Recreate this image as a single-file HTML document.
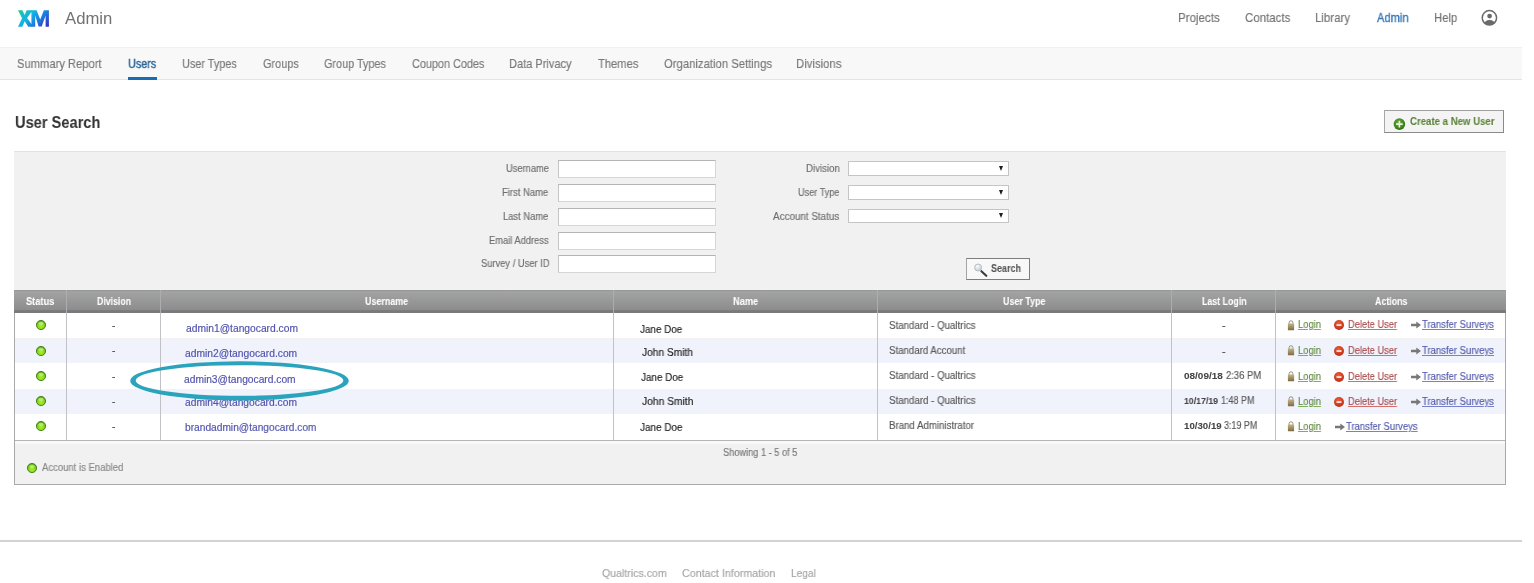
<!DOCTYPE html>
<html><head><meta charset="utf-8">
<style>
*{margin:0;padding:0;box-sizing:border-box}
html,body{width:1534px;height:583px;overflow:hidden;background:#fff;font-family:"Liberation Sans",sans-serif}
.tx{position:absolute;white-space:nowrap;transform-origin:0 0;will-change:transform;-webkit-text-stroke:0.15px currentColor;font-family:"Liberation Sans",sans-serif}
.b{position:absolute}
.inp{position:absolute;left:557.6px;width:158.6px;height:18px;background:#fff;border:1px solid #d6d6d6;border-top-color:#b4b4b4;border-left-color:#c4c4c4}
.sel{position:absolute;left:848px;width:160.5px;height:14.6px;background:#fff;border:1px solid #c4c4c4}
.sel:after{content:"";position:absolute;left:150px;top:3.8px;border-left:2.5px solid transparent;border-right:2.5px solid transparent;border-top:5px solid #1e1e1e}
.vl{position:absolute;width:1px}
.dot{position:absolute;width:10px;height:10px;border-radius:50%;background:radial-gradient(circle at 50% 45%,#b8f260 0,#8ad82a 35%,#58b010 70%,#3a7e08 100%)}
.row{position:absolute;left:15px;width:1490px}
</style></head><body>
<!-- logo -->
<svg class="b" style="left:0;top:0" width="60" height="35" viewBox="0 0 60 35">
 <defs><linearGradient id="xm" gradientUnits="userSpaceOnUse" x1="21" y1="8" x2="43" y2="31"><stop offset="0" stop-color="#1fca9a"/><stop offset="0.38" stop-color="#12b3e6"/><stop offset="0.7" stop-color="#1f72dc"/><stop offset="1" stop-color="#3b2cc0"/></linearGradient></defs>
 <path fill="url(#xm)" d="M18 10.2H22.4L24.6 15L26.7 10.2H32.2V12H31.4L27.1 18.1L31.4 23.9H32.2V26.8H28.2L24.7 21.3L22.3 26.8H18L22.1 18.3Z"/>
 <path fill="url(#xm)" d="M31.4 26.8V10.2H36.6L40.2 19.6L43.9 10.2H48.9V26.8H45.6V15.5L41.7 26.6H38.6L35.2 15.5V26.8Z"/>
</svg>
<!-- user icon -->
<svg class="b" style="left:1480px;top:8px" width="20" height="20" viewBox="0 0 20 20">
 <defs><clipPath id="uc"><circle cx="9.4" cy="9.8" r="7.2"/></clipPath></defs>
 <circle cx="9.4" cy="9.8" r="7.2" fill="none" stroke="#6a6a6a" stroke-width="1.5"/>
 <circle cx="9.6" cy="8.1" r="2.4" fill="#6a6a6a"/>
 <path clip-path="url(#uc)" d="M4.6 20V15.6Q4.9 12.1 9.6 12.1Q14.3 12.1 14.6 15.6V20Z" fill="#6a6a6a"/>
</svg>
<!-- tab bar -->
<div class="b" style="left:0;top:47px;width:1522px;height:33px;background:#f8f8f8;border-top:1px solid #f0f0f0;border-bottom:1px solid #e4e4e4"></div>
<div class="b" style="left:128px;top:77px;width:29px;height:3px;background:#1b6db3"></div>
<!-- create button -->
<div class="b" style="left:1384px;top:110.2px;width:120px;height:22.4px;background:#f4f4f4;border:1px solid #8a8a8a;border-left-color:#a8a8a8;border-top-color:#a0a0a0"></div>
<svg class="b" style="left:1393px;top:117.5px" width="13" height="13" viewBox="0 0 13 13">
 <defs><radialGradient id="gp" cx="0.45" cy="0.4" r="0.65"><stop offset="0" stop-color="#6fb040"/><stop offset="1" stop-color="#2c6e12"/></radialGradient></defs>
 <circle cx="6.4" cy="6.1" r="5.8" fill="url(#gp)"/>
 <path d="M5.6 2.8H7.2V5.3H9.7V6.9H7.2V9.4H5.6V6.9H3.1V5.3H5.6Z" fill="#e4f6d8"/>
</svg>
<!-- search panel -->
<div class="b" style="left:14px;top:151px;width:1492px;height:140px;background:#f1f1f1;border-top:1px solid #e2e2e2"></div>
<div class="inp" style="top:160.1px"></div>
<div class="inp" style="top:184.3px"></div>
<div class="inp" style="top:208.1px"></div>
<div class="inp" style="top:231.7px"></div>
<div class="inp" style="top:255.2px"></div>
<div class="sel" style="top:161.3px"></div>
<div class="sel" style="top:185.1px"></div>
<div class="sel" style="top:208.6px"></div>
<div class="b" style="left:965.8px;top:258.1px;width:64px;height:21.8px;background:#f8f8f8;border:1px solid #7d7d7d;border-left-color:#a5a5a5"></div>
<svg class="b" style="left:972px;top:262px" width="17" height="17" viewBox="0 0 17 17">
 <defs><radialGradient id="lens" cx="0.4" cy="0.35" r="0.75"><stop offset="0" stop-color="#fafbfc"/><stop offset="1" stop-color="#bfc4cc"/></radialGradient></defs>
 <line x1="9.4" y1="9.2" x2="14.3" y2="13.8" stroke="#3a3a3a" stroke-width="2.1" stroke-linecap="round"/>
 <circle cx="6.1" cy="5.5" r="3.5" fill="url(#lens)" stroke="#b4b9c2" stroke-width="0.9"/>
</svg>
<!-- table -->
<div class="b" style="left:14px;top:290.1px;width:1492px;height:22.8px;background:linear-gradient(#959595,#a2a3a2 8%,#8d8d8f 85%,#787878 90%,#7a7a7a)"></div>
<div class="b" style="left:14px;top:312.9px;width:1492px;height:171.9px;background:#f1f1f1;border:1px solid #a9a9a9;border-top:none"></div>
<div class="row" style="top:312.9px;height:25.6px;background:#fff"></div>
<div class="row" style="top:338.5px;height:24px;background:#f0f3fc"></div>
<div class="row" style="top:362.5px;height:26.5px;background:#fff"></div>
<div class="row" style="top:389px;height:24.5px;background:#f0f3fc"></div>
<div class="row" style="top:413.5px;height:26.5px;background:#fff"></div>
<div class="b" style="left:15px;top:440px;width:1490px;height:1px;background:#b4b4b4"></div>
<div class="b" style="left:15px;top:441px;width:1490px;height:3px;background:#f8f8f8"></div>
<!-- column lines -->
<div class="vl" style="left:65.5px;top:290.1px;height:22.8px;background:#adadad"></div>
<div class="vl" style="left:160px;top:290.1px;height:22.8px;background:#adadad"></div>
<div class="vl" style="left:612.5px;top:290.1px;height:22.8px;background:#adadad"></div>
<div class="vl" style="left:876.5px;top:290.1px;height:22.8px;background:#adadad"></div>
<div class="vl" style="left:1170.5px;top:290.1px;height:22.8px;background:#adadad"></div>
<div class="vl" style="left:1274.5px;top:290.1px;height:22.8px;background:#adadad"></div>
<div class="vl" style="left:65.5px;top:312.9px;height:127.6px;background:#c2c2c6;width:1.4px"></div>
<div class="vl" style="left:160px;top:312.9px;height:127.6px;background:#c2c2c6;width:1.4px"></div>
<div class="vl" style="left:612.5px;top:312.9px;height:127.6px;background:#c2c2c6;width:1.4px"></div>
<div class="vl" style="left:876.5px;top:312.9px;height:127.6px;background:#c2c2c6;width:1.4px"></div>
<div class="vl" style="left:1170.5px;top:312.9px;height:127.6px;background:#c2c2c6;width:1.4px"></div>
<div class="vl" style="left:1274.5px;top:312.9px;height:127.6px;background:#c2c2c6;width:1.4px"></div>
<!-- status dots -->
<svg width="0" height="0" style="position:absolute"><defs><radialGradient id="gd" cx="0.5" cy="0.62" r="0.6"><stop offset="0" stop-color="#aef22e"/><stop offset="0.6" stop-color="#86d41c"/><stop offset="1" stop-color="#4c9a10"/></radialGradient></defs></svg>
<svg class="b" style="left:34.50px;top:319.40px" width="12" height="12" viewBox="0 0 12 12"><circle cx="6" cy="6" r="4.6" fill="url(#gd)" stroke="#3f7f12" stroke-width="0.9"/><ellipse cx="6" cy="4.4" rx="2.6" ry="1.6" fill="#d8f8a8" opacity="0.55"/></svg>
<svg class="b" style="left:34.50px;top:344.60px" width="12" height="12" viewBox="0 0 12 12"><circle cx="6" cy="6" r="4.6" fill="url(#gd)" stroke="#3f7f12" stroke-width="0.9"/><ellipse cx="6" cy="4.4" rx="2.6" ry="1.6" fill="#d8f8a8" opacity="0.55"/></svg>
<svg class="b" style="left:34.50px;top:369.70px" width="12" height="12" viewBox="0 0 12 12"><circle cx="6" cy="6" r="4.6" fill="url(#gd)" stroke="#3f7f12" stroke-width="0.9"/><ellipse cx="6" cy="4.4" rx="2.6" ry="1.6" fill="#d8f8a8" opacity="0.55"/></svg>
<svg class="b" style="left:34.50px;top:395.00px" width="12" height="12" viewBox="0 0 12 12"><circle cx="6" cy="6" r="4.6" fill="url(#gd)" stroke="#3f7f12" stroke-width="0.9"/><ellipse cx="6" cy="4.4" rx="2.6" ry="1.6" fill="#d8f8a8" opacity="0.55"/></svg>
<svg class="b" style="left:34.50px;top:420.10px" width="12" height="12" viewBox="0 0 12 12"><circle cx="6" cy="6" r="4.6" fill="url(#gd)" stroke="#3f7f12" stroke-width="0.9"/><ellipse cx="6" cy="4.4" rx="2.6" ry="1.6" fill="#d8f8a8" opacity="0.55"/></svg>
<svg class="b" style="left:25.90px;top:462.20px" width="12" height="12" viewBox="0 0 12 12"><circle cx="6" cy="6" r="4.6" fill="url(#gd)" stroke="#3f7f12" stroke-width="0.9"/><ellipse cx="6" cy="4.4" rx="2.6" ry="1.6" fill="#d8f8a8" opacity="0.55"/></svg>
<svg class="b" style="left:1287.00px;top:319.50px" width="8" height="11" viewBox="0 0 8 11"><defs><linearGradient id="lk" x1="0" y1="0" x2="0" y2="1"><stop offset="0" stop-color="#c2b486"/><stop offset="1" stop-color="#7c6b40"/></linearGradient></defs><path d="M2.1 4V2.5Q2.1 0.8 4 0.8Q5.9 0.8 5.9 2.5V4" fill="none" stroke="#8c846c" stroke-width="0.9"/><rect x="0.9" y="3.6" width="6.2" height="6.6" rx="0.5" fill="url(#lk)"/></svg>
<svg class="b" style="left:1333.10px;top:319.40px" width="12" height="12" viewBox="0 0 12 12"><defs><radialGradient id="dl" cx="0.45" cy="0.35" r="0.7"><stop offset="0" stop-color="#f0603a"/><stop offset="1" stop-color="#b52a12"/></radialGradient></defs><circle cx="6" cy="6" r="5" fill="url(#dl)"/><rect x="3.5" y="5.3" width="5" height="1.5" fill="#fff"/></svg>
<svg class="b" style="left:1410.90px;top:321.40px" width="11" height="8" viewBox="0 0 11 8"><path d="M0 2.7H5.3V0.6L10 4L5.3 7.4V5.3H0Z" fill="#787878"/></svg>
<svg class="b" style="left:1287.00px;top:345.10px" width="8" height="11" viewBox="0 0 8 11"><defs><linearGradient id="lk" x1="0" y1="0" x2="0" y2="1"><stop offset="0" stop-color="#c2b486"/><stop offset="1" stop-color="#7c6b40"/></linearGradient></defs><path d="M2.1 4V2.5Q2.1 0.8 4 0.8Q5.9 0.8 5.9 2.5V4" fill="none" stroke="#8c846c" stroke-width="0.9"/><rect x="0.9" y="3.6" width="6.2" height="6.6" rx="0.5" fill="url(#lk)"/></svg>
<svg class="b" style="left:1333.10px;top:345.00px" width="12" height="12" viewBox="0 0 12 12"><defs><radialGradient id="dl" cx="0.45" cy="0.35" r="0.7"><stop offset="0" stop-color="#f0603a"/><stop offset="1" stop-color="#b52a12"/></radialGradient></defs><circle cx="6" cy="6" r="5" fill="url(#dl)"/><rect x="3.5" y="5.3" width="5" height="1.5" fill="#fff"/></svg>
<svg class="b" style="left:1410.90px;top:347.00px" width="11" height="8" viewBox="0 0 11 8"><path d="M0 2.7H5.3V0.6L10 4L5.3 7.4V5.3H0Z" fill="#787878"/></svg>
<svg class="b" style="left:1287.00px;top:370.70px" width="8" height="11" viewBox="0 0 8 11"><defs><linearGradient id="lk" x1="0" y1="0" x2="0" y2="1"><stop offset="0" stop-color="#c2b486"/><stop offset="1" stop-color="#7c6b40"/></linearGradient></defs><path d="M2.1 4V2.5Q2.1 0.8 4 0.8Q5.9 0.8 5.9 2.5V4" fill="none" stroke="#8c846c" stroke-width="0.9"/><rect x="0.9" y="3.6" width="6.2" height="6.6" rx="0.5" fill="url(#lk)"/></svg>
<svg class="b" style="left:1333.10px;top:370.60px" width="12" height="12" viewBox="0 0 12 12"><defs><radialGradient id="dl" cx="0.45" cy="0.35" r="0.7"><stop offset="0" stop-color="#f0603a"/><stop offset="1" stop-color="#b52a12"/></radialGradient></defs><circle cx="6" cy="6" r="5" fill="url(#dl)"/><rect x="3.5" y="5.3" width="5" height="1.5" fill="#fff"/></svg>
<svg class="b" style="left:1410.90px;top:372.60px" width="11" height="8" viewBox="0 0 11 8"><path d="M0 2.7H5.3V0.6L10 4L5.3 7.4V5.3H0Z" fill="#787878"/></svg>
<svg class="b" style="left:1287.00px;top:395.80px" width="8" height="11" viewBox="0 0 8 11"><defs><linearGradient id="lk" x1="0" y1="0" x2="0" y2="1"><stop offset="0" stop-color="#c2b486"/><stop offset="1" stop-color="#7c6b40"/></linearGradient></defs><path d="M2.1 4V2.5Q2.1 0.8 4 0.8Q5.9 0.8 5.9 2.5V4" fill="none" stroke="#8c846c" stroke-width="0.9"/><rect x="0.9" y="3.6" width="6.2" height="6.6" rx="0.5" fill="url(#lk)"/></svg>
<svg class="b" style="left:1333.10px;top:395.70px" width="12" height="12" viewBox="0 0 12 12"><defs><radialGradient id="dl" cx="0.45" cy="0.35" r="0.7"><stop offset="0" stop-color="#f0603a"/><stop offset="1" stop-color="#b52a12"/></radialGradient></defs><circle cx="6" cy="6" r="5" fill="url(#dl)"/><rect x="3.5" y="5.3" width="5" height="1.5" fill="#fff"/></svg>
<svg class="b" style="left:1410.90px;top:397.70px" width="11" height="8" viewBox="0 0 11 8"><path d="M0 2.7H5.3V0.6L10 4L5.3 7.4V5.3H0Z" fill="#787878"/></svg>
<svg class="b" style="left:1287.00px;top:420.90px" width="8" height="11" viewBox="0 0 8 11"><defs><linearGradient id="lk" x1="0" y1="0" x2="0" y2="1"><stop offset="0" stop-color="#c2b486"/><stop offset="1" stop-color="#7c6b40"/></linearGradient></defs><path d="M2.1 4V2.5Q2.1 0.8 4 0.8Q5.9 0.8 5.9 2.5V4" fill="none" stroke="#8c846c" stroke-width="0.9"/><rect x="0.9" y="3.6" width="6.2" height="6.6" rx="0.5" fill="url(#lk)"/></svg>
<svg class="b" style="left:1334.60px;top:422.80px" width="11" height="8" viewBox="0 0 11 8"><path d="M0 2.7H5.3V0.6L10 4L5.3 7.4V5.3H0Z" fill="#787878"/></svg>
<!-- footer -->
<div class="b" style="left:0;top:540px;width:1522px;height:2px;background:#d2d2d2"></div>
<div class="tx" style="left:65.20px;top:10.00px;font-size:16.5px;line-height:16.5px;font-weight:normal;color:#727272;transform:scaleX(1.0109);-webkit-text-stroke:0">Admin</div>
<div class="tx" style="left:1177.59px;top:12.10px;font-size:12.7px;line-height:12.7px;font-weight:normal;color:#737373;transform:scaleX(0.9104);">Projects</div>
<div class="tx" style="left:1245.00px;top:12.10px;font-size:12.7px;line-height:12.7px;font-weight:normal;color:#737373;transform:scaleX(0.9050);">Contacts</div>
<div class="tx" style="left:1314.80px;top:12.10px;font-size:12.7px;line-height:12.7px;font-weight:normal;color:#737373;transform:scaleX(0.9028);">Library</div>
<div class="tx" style="left:1376.70px;top:12.10px;font-size:12.7px;line-height:12.7px;font-weight:normal;color:#3878b6;transform:scaleX(0.8773);-webkit-text-stroke:0.35px #3878b6">Admin</div>
<div class="tx" style="left:1433.61px;top:12.10px;font-size:12.7px;line-height:12.7px;font-weight:normal;color:#737373;transform:scaleX(0.8907);">Help</div>
<div class="tx" style="left:16.70px;top:58.00px;font-size:12.7px;line-height:12.7px;font-weight:normal;color:#787878;transform:scaleX(0.8821);">Summary Report</div>
<div class="tx" style="left:182.30px;top:58.00px;font-size:12.7px;line-height:12.7px;font-weight:normal;color:#787878;transform:scaleX(0.8571);">User Types</div>
<div class="tx" style="left:262.70px;top:58.00px;font-size:12.7px;line-height:12.7px;font-weight:normal;color:#787878;transform:scaleX(0.8603);">Groups</div>
<div class="tx" style="left:324.10px;top:58.00px;font-size:12.7px;line-height:12.7px;font-weight:normal;color:#787878;transform:scaleX(0.8549);">Group Types</div>
<div class="tx" style="left:411.70px;top:58.00px;font-size:12.7px;line-height:12.7px;font-weight:normal;color:#787878;transform:scaleX(0.8541);">Coupon Codes</div>
<div class="tx" style="left:508.53px;top:58.00px;font-size:12.7px;line-height:12.7px;font-weight:normal;color:#787878;transform:scaleX(0.8704);">Data Privacy</div>
<div class="tx" style="left:597.90px;top:58.00px;font-size:12.7px;line-height:12.7px;font-weight:normal;color:#787878;transform:scaleX(0.8816);">Themes</div>
<div class="tx" style="left:663.70px;top:58.00px;font-size:12.7px;line-height:12.7px;font-weight:normal;color:#787878;transform:scaleX(0.8904);">Organization Settings</div>
<div class="tx" style="left:796.31px;top:58.00px;font-size:12.7px;line-height:12.7px;font-weight:normal;color:#787878;transform:scaleX(0.8944);">Divisions</div>
<div class="tx" style="left:128.30px;top:58.00px;font-size:12.7px;line-height:12.7px;font-weight:normal;color:#2c6699;transform:scaleX(0.8509);-webkit-text-stroke:0.45px #2c6699">Users</div>
<div class="tx" style="left:15.00px;top:113.60px;font-size:16.5px;line-height:16.5px;font-weight:bold;color:#353535;transform:scaleX(0.8864);-webkit-text-stroke:0.05px currentColor;">User Search</div>
<div class="tx" style="left:1409.80px;top:117.20px;font-size:10.1px;line-height:10.1px;font-weight:bold;color:#5a8336;transform:scaleX(0.9536);-webkit-text-stroke:0.05px currentColor;">Create a New User</div>
<div class="tx" style="left:505.70px;top:164.10px;font-size:10.0px;line-height:10.0px;font-weight:normal;color:#6e6e6e;transform:scaleX(0.9299);">Username</div>
<div class="tx" style="left:502.40px;top:188.10px;font-size:10.0px;line-height:10.0px;font-weight:normal;color:#6e6e6e;transform:scaleX(0.9447);">First Name</div>
<div class="tx" style="left:503.30px;top:212.10px;font-size:10.0px;line-height:10.0px;font-weight:normal;color:#6e6e6e;transform:scaleX(0.9366);">Last Name</div>
<div class="tx" style="left:488.90px;top:235.70px;font-size:10.0px;line-height:10.0px;font-weight:normal;color:#6e6e6e;transform:scaleX(0.9322);">Email Address</div>
<div class="tx" style="left:480.70px;top:259.00px;font-size:10.0px;line-height:10.0px;font-weight:normal;color:#6e6e6e;transform:scaleX(0.9340);">Survey / User ID</div>
<div class="tx" style="left:806.40px;top:164.10px;font-size:10.0px;line-height:10.0px;font-weight:normal;color:#6e6e6e;transform:scaleX(0.9638);">Division</div>
<div class="tx" style="left:797.60px;top:188.00px;font-size:10.0px;line-height:10.0px;font-weight:normal;color:#6e6e6e;transform:scaleX(0.9128);">User Type</div>
<div class="tx" style="left:773.30px;top:212.00px;font-size:10.0px;line-height:10.0px;font-weight:normal;color:#6e6e6e;transform:scaleX(0.9857);">Account Status</div>
<div class="tx" style="left:990.90px;top:263.80px;font-size:10.1px;line-height:10.1px;font-weight:bold;color:#555;transform:scaleX(0.8895);-webkit-text-stroke:0.05px currentColor;">Search</div>
<div class="tx" style="left:26.00px;top:296.80px;font-size:10.3px;line-height:10.3px;font-weight:bold;color:#ffffff;transform:scaleX(0.9010);-webkit-text-stroke:0.05px currentColor;">Status</div>
<div class="tx" style="left:96.50px;top:296.80px;font-size:10.3px;line-height:10.3px;font-weight:bold;color:#ffffff;transform:scaleX(0.8501);-webkit-text-stroke:0.05px currentColor;">Division</div>
<div class="tx" style="left:365.00px;top:296.80px;font-size:10.3px;line-height:10.3px;font-weight:bold;color:#ffffff;transform:scaleX(0.8648);-webkit-text-stroke:0.05px currentColor;">Username</div>
<div class="tx" style="left:732.60px;top:296.80px;font-size:10.3px;line-height:10.3px;font-weight:bold;color:#ffffff;transform:scaleX(0.8969);-webkit-text-stroke:0.05px currentColor;">Name</div>
<div class="tx" style="left:1003.20px;top:296.80px;font-size:10.3px;line-height:10.3px;font-weight:bold;color:#ffffff;transform:scaleX(0.8661);-webkit-text-stroke:0.05px currentColor;">User Type</div>
<div class="tx" style="left:1201.50px;top:296.80px;font-size:10.3px;line-height:10.3px;font-weight:bold;color:#ffffff;transform:scaleX(0.8578);-webkit-text-stroke:0.05px currentColor;">Last Login</div>
<div class="tx" style="left:1374.50px;top:296.80px;font-size:10.3px;line-height:10.3px;font-weight:bold;color:#ffffff;transform:scaleX(0.8572);-webkit-text-stroke:0.05px currentColor;">Actions</div>
<div class="tx" style="left:185.80px;top:323.90px;font-size:10.2px;line-height:10.2px;font-weight:normal;color:#4f51aa;transform:scaleX(1.0076);">admin1@tangocard.com</div>
<div class="tx" style="left:184.80px;top:348.60px;font-size:10.2px;line-height:10.2px;font-weight:normal;color:#4f51aa;transform:scaleX(1.0094);">admin2@tangocard.com</div>
<div class="tx" style="left:184.40px;top:375.00px;font-size:10.2px;line-height:10.2px;font-weight:normal;color:#4f51aa;transform:scaleX(1.0040);">admin3@tangocard.com</div>
<div class="tx" style="left:185.00px;top:398.30px;font-size:10.2px;line-height:10.2px;font-weight:normal;color:#4f51aa;transform:scaleX(1.0076);">admin4@tangocard.com</div>
<div class="tx" style="left:184.80px;top:422.80px;font-size:10.2px;line-height:10.2px;font-weight:normal;color:#4f51aa;transform:scaleX(0.9989);">brandadmin@tangocard.com</div>
<div class="tx" style="left:640.10px;top:324.20px;font-size:10.5px;line-height:10.5px;font-weight:normal;color:#1c1c1c;transform:scaleX(0.9400);">Jane Doe</div>
<div class="tx" style="left:642.00px;top:347.20px;font-size:10.5px;line-height:10.5px;font-weight:normal;color:#1c1c1c;transform:scaleX(0.9680);">John Smith</div>
<div class="tx" style="left:641.00px;top:371.70px;font-size:10.5px;line-height:10.5px;font-weight:normal;color:#1c1c1c;transform:scaleX(0.9400);">Jane Doe</div>
<div class="tx" style="left:641.80px;top:396.20px;font-size:10.5px;line-height:10.5px;font-weight:normal;color:#1c1c1c;transform:scaleX(0.9775);">John Smith</div>
<div class="tx" style="left:640.30px;top:422.30px;font-size:10.5px;line-height:10.5px;font-weight:normal;color:#1c1c1c;transform:scaleX(0.9466);">Jane Doe</div>
<div class="tx" style="left:888.80px;top:320.60px;font-size:10px;line-height:10px;font-weight:normal;color:#585858;transform:scaleX(0.9716);">Standard - Qualtrics</div>
<div class="tx" style="left:888.80px;top:345.60px;font-size:10px;line-height:10px;font-weight:normal;color:#585858;transform:scaleX(0.9659);">Standard Account</div>
<div class="tx" style="left:888.80px;top:371.20px;font-size:10px;line-height:10px;font-weight:normal;color:#585858;transform:scaleX(0.9716);">Standard - Qualtrics</div>
<div class="tx" style="left:888.80px;top:396.30px;font-size:10px;line-height:10px;font-weight:normal;color:#585858;transform:scaleX(0.9716);">Standard - Qualtrics</div>
<div class="tx" style="left:888.80px;top:421.40px;font-size:10px;line-height:10px;font-weight:normal;color:#585858;transform:scaleX(0.9681);">Brand Administrator</div>
<div class="tx" style="left:112.20px;top:320.50px;font-size:9.6px;line-height:9.6px;font-weight:normal;color:#444;transform:scaleX(1.0667);">-</div>
<div class="tx" style="left:112.20px;top:346.10px;font-size:9.6px;line-height:9.6px;font-weight:normal;color:#444;transform:scaleX(1.0667);">-</div>
<div class="tx" style="left:112.20px;top:371.80px;font-size:9.6px;line-height:9.6px;font-weight:normal;color:#444;transform:scaleX(1.0667);">-</div>
<div class="tx" style="left:112.20px;top:396.80px;font-size:9.6px;line-height:9.6px;font-weight:normal;color:#444;transform:scaleX(1.0667);">-</div>
<div class="tx" style="left:112.20px;top:421.90px;font-size:9.6px;line-height:9.6px;font-weight:normal;color:#444;transform:scaleX(1.0667);">-</div>
<div class="tx" style="left:1221.90px;top:320.70px;font-size:9.6px;line-height:9.6px;font-weight:normal;color:#444;transform:scaleX(1.1333);">-</div>
<div class="tx" style="left:1221.90px;top:346.70px;font-size:9.6px;line-height:9.6px;font-weight:normal;color:#444;transform:scaleX(1.1333);">-</div>
<div class="tx" style="left:1183.80px;top:370.90px;font-size:9.6px;line-height:9.6px;font-weight:bold;color:#444;transform:scaleX(1.0392);-webkit-text-stroke:0.05px currentColor;">08/09/18</div>
<div class="tx" style="left:1226.20px;top:370.90px;font-size:10px;line-height:10px;font-weight:normal;color:#585858;transform:scaleX(0.9428);">2:36 PM</div>
<div class="tx" style="left:1183.80px;top:396.30px;font-size:9.6px;line-height:9.6px;font-weight:bold;color:#444;transform:scaleX(0.9106);-webkit-text-stroke:0.05px currentColor;">10/17/19</div>
<div class="tx" style="left:1220.70px;top:396.30px;font-size:10px;line-height:10px;font-weight:normal;color:#585858;transform:scaleX(0.8967);">1:48 PM</div>
<div class="tx" style="left:1183.80px;top:421.40px;font-size:9.6px;line-height:9.6px;font-weight:bold;color:#444;transform:scaleX(1.0079);-webkit-text-stroke:0.05px currentColor;">10/30/19</div>
<div class="tx" style="left:1224.20px;top:421.40px;font-size:10px;line-height:10px;font-weight:normal;color:#585858;transform:scaleX(0.8913);">3:19 PM</div>
<div class="tx" style="left:1298.40px;top:320.40px;font-size:10.3px;line-height:10.3px;font-weight:normal;color:#5e8a3c;transform:scaleX(0.9110);text-decoration:underline;text-decoration-color:#7db05a">Login</div>
<div class="tx" style="left:1347.60px;top:320.40px;font-size:10.3px;line-height:10.3px;font-weight:normal;color:#a8494a;transform:scaleX(0.9010);text-decoration:underline;text-decoration-color:#d46e6a">Delete User</div>
<div class="tx" style="left:1422.10px;top:320.40px;font-size:10.3px;line-height:10.3px;font-weight:normal;color:#5159aa;transform:scaleX(0.9221);text-decoration:underline;text-decoration-color:#7780cc">Transfer Surveys</div>
<div class="tx" style="left:1298.40px;top:346.00px;font-size:10.3px;line-height:10.3px;font-weight:normal;color:#5e8a3c;transform:scaleX(0.9110);text-decoration:underline;text-decoration-color:#7db05a">Login</div>
<div class="tx" style="left:1347.60px;top:346.00px;font-size:10.3px;line-height:10.3px;font-weight:normal;color:#a8494a;transform:scaleX(0.9010);text-decoration:underline;text-decoration-color:#d46e6a">Delete User</div>
<div class="tx" style="left:1422.10px;top:346.00px;font-size:10.3px;line-height:10.3px;font-weight:normal;color:#5159aa;transform:scaleX(0.9221);text-decoration:underline;text-decoration-color:#7780cc">Transfer Surveys</div>
<div class="tx" style="left:1298.40px;top:371.60px;font-size:10.3px;line-height:10.3px;font-weight:normal;color:#5e8a3c;transform:scaleX(0.9110);text-decoration:underline;text-decoration-color:#7db05a">Login</div>
<div class="tx" style="left:1347.60px;top:371.60px;font-size:10.3px;line-height:10.3px;font-weight:normal;color:#a8494a;transform:scaleX(0.9010);text-decoration:underline;text-decoration-color:#d46e6a">Delete User</div>
<div class="tx" style="left:1422.10px;top:371.60px;font-size:10.3px;line-height:10.3px;font-weight:normal;color:#5159aa;transform:scaleX(0.9221);text-decoration:underline;text-decoration-color:#7780cc">Transfer Surveys</div>
<div class="tx" style="left:1298.40px;top:396.70px;font-size:10.3px;line-height:10.3px;font-weight:normal;color:#5e8a3c;transform:scaleX(0.9110);text-decoration:underline;text-decoration-color:#7db05a">Login</div>
<div class="tx" style="left:1347.60px;top:396.70px;font-size:10.3px;line-height:10.3px;font-weight:normal;color:#a8494a;transform:scaleX(0.9010);text-decoration:underline;text-decoration-color:#d46e6a">Delete User</div>
<div class="tx" style="left:1422.10px;top:396.70px;font-size:10.3px;line-height:10.3px;font-weight:normal;color:#5159aa;transform:scaleX(0.9221);text-decoration:underline;text-decoration-color:#7780cc">Transfer Surveys</div>
<div class="tx" style="left:1298.40px;top:421.80px;font-size:10.3px;line-height:10.3px;font-weight:normal;color:#5e8a3c;transform:scaleX(0.9110);text-decoration:underline;text-decoration-color:#7db05a">Login</div>
<div class="tx" style="left:1346.20px;top:421.80px;font-size:10.3px;line-height:10.3px;font-weight:normal;color:#5159aa;transform:scaleX(0.9183);text-decoration:underline;text-decoration-color:#7780cc">Transfer Surveys</div>
<div class="tx" style="left:722.90px;top:448.20px;font-size:10px;line-height:10px;font-weight:normal;color:#777;transform:scaleX(0.9217);">Showing 1 - 5 of 5</div>
<div class="tx" style="left:42.40px;top:463.30px;font-size:10px;line-height:10px;font-weight:normal;color:#888;transform:scaleX(0.9500);">Account is Enabled</div>
<div class="tx" style="left:601.50px;top:567.60px;font-size:11.3px;line-height:11.3px;font-weight:normal;color:#a4a4a4;transform:scaleX(0.9368);">Qualtrics.com</div>
<div class="tx" style="left:682.00px;top:567.60px;font-size:11.3px;line-height:11.3px;font-weight:normal;color:#a4a4a4;transform:scaleX(0.9481);">Contact Information</div>
<div class="tx" style="left:791.20px;top:567.60px;font-size:11.3px;line-height:11.3px;font-weight:normal;color:#a4a4a4;transform:scaleX(0.8993);">Legal</div>
<!-- highlight ellipse -->
<svg class="b" style="left:0;top:0" width="1534" height="583" viewBox="0 0 1534 583">
 <path fill="#2aa4bc" fill-rule="evenodd" d="M130.2 380.85A109.3 19.55 0 1 0 348.8 380.85A109.3 19.55 0 1 0 130.2 380.85ZM135.7 380.5A103.8 15.35 0 1 0 343.3 380.5A103.8 15.35 0 1 0 135.7 380.5Z"/>
</svg>
</body></html>
